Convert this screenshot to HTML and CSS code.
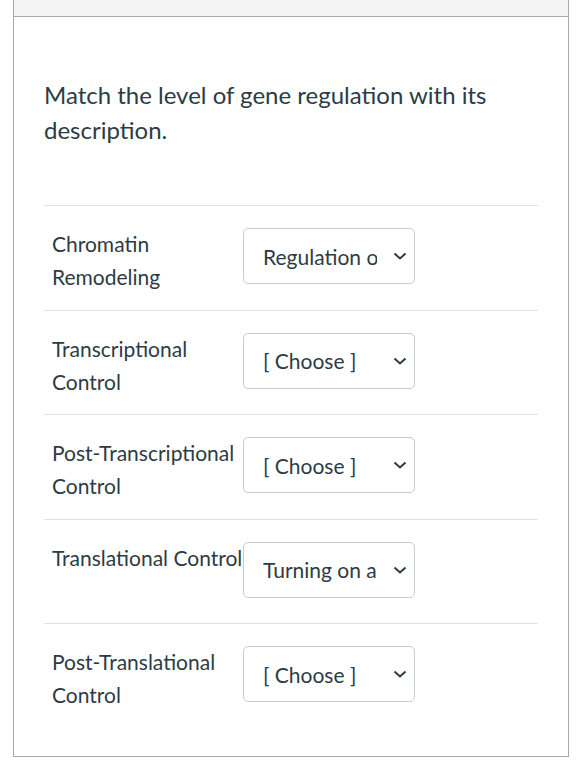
FILE: index.html
```html
<!DOCTYPE html>
<html>
<head>
<meta charset="utf-8">
<link rel="stylesheet" href="styles.css">
</head>
<body>
<div class="frame">
  <div class="frame-head"></div>
  <div class="frame-body">
    <p class="question">Match the level of gene regulation with its description.</p>
    <div class="rows">
      <div class="row">
        <div class="label">Chromatin Remodeling</div>
        <div class="select"><span class="value">Regulation of chromatin</span><svg class="chev" viewBox="0 0 14 8" width="14" height="8"><path d="M1.5 1.5 L7 6.5 L12.5 1.5" fill="none" stroke="#2d3b45" stroke-width="2"/></svg></div>
      </div>
      <div class="row">
        <div class="label">Transcriptional Control</div>
        <div class="select"><span class="value">[ Choose ]</span><svg class="chev" viewBox="0 0 14 8" width="14" height="8"><path d="M1.5 1.5 L7 6.5 L12.5 1.5" fill="none" stroke="#2d3b45" stroke-width="2"/></svg></div>
      </div>
      <div class="row">
        <div class="label">Post-Transcriptional Control</div>
        <div class="select"><span class="value">[ Choose ]</span><svg class="chev" viewBox="0 0 14 8" width="14" height="8"><path d="M1.5 1.5 L7 6.5 L12.5 1.5" fill="none" stroke="#2d3b45" stroke-width="2"/></svg></div>
      </div>
      <div class="row">
        <div class="label">Translational Control</div>
        <div class="select"><span class="value">Turning on a gene</span><svg class="chev" viewBox="0 0 14 8" width="14" height="8"><path d="M1.5 1.5 L7 6.5 L12.5 1.5" fill="none" stroke="#2d3b45" stroke-width="2"/></svg></div>
      </div>
      <div class="row">
        <div class="label">Post-Translational Control</div>
        <div class="select"><span class="value">[ Choose ]</span><svg class="chev" viewBox="0 0 14 8" width="14" height="8"><path d="M1.5 1.5 L7 6.5 L12.5 1.5" fill="none" stroke="#2d3b45" stroke-width="2"/></svg></div>
      </div>
    </div>
  </div>
</div>
</body>
</html>
```

FILE: styles.css
```css
html, body {
  margin: 0;
  padding: 0;
  background: #ffffff;
}
body {
  font-family: Lato, "Open Sans", sans-serif;
  color: #2d3b45;
}
.frame {
  margin-left: 13px;
  width: 556px;
  height: 757px;
  box-sizing: border-box;
  border: 1px solid #a8a8a8;
  border-top: none;
}
.frame-head {
  height: 16px;
  background: #f4f4f4;
  border-bottom: 1px solid #a8a8a8;
}
.frame-body {
  padding: 0 30px 0 30px;
}
.question {
  margin: 60px 0 0 0;
  font-size: 24px;
  line-height: 35px;
}
.rows {
  margin-top: 58px;
}
.row {
  display: flex;
  align-items: flex-start;
  border-top: 1px solid #dfe1e3;
  padding: 22px 0 16.5px 8px;
}
.label {
  width: 191px;
  flex: none;
  font-size: 21px;
  line-height: 33px;
  margin-top: -1px;
  white-space: normal;
}
.select {
  width: 172px;
  height: 56px;
  margin-bottom: 9px;
  box-sizing: border-box;
  border: 1px solid #c7cdd1;
  border-radius: 5px;
  display: flex;
  align-items: center;
  padding: 0 7px 0 19px;
  font-size: 21px;
}
.value {
  flex: none;
  width: 114px;
  white-space: nowrap;
  overflow: hidden;
}
.chev {
  flex: none;
  margin-left: auto;
}
```
